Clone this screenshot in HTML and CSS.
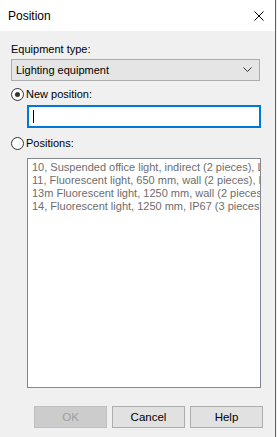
FILE: index.html
```html
<!DOCTYPE html>
<html lang="en">
<head>
    <meta charset="UTF-8">
    <title>Position</title>
    <link rel="stylesheet" href="styles.css">
</head>
<body>
    <div class="dialog">
        <div class="titlebar">
            <span class="title">Position</span>
            <svg class="close" width="10" height="10" viewBox="0 0 10 10">
                <path d="M0.5 0.5 L9.5 9.5 M9.5 0.5 L0.5 9.5" stroke="#000" stroke-width="1" fill="none"/>
            </svg>
        </div>
        <div class="content">
            <div class="label">Equipment type:</div>
            <div class="combo">
                <span>Lighting equipment</span>
                <svg width="9" height="6" viewBox="0 0 9 6">
                    <path d="M0.5 0.5 L4.5 4.5 L8.5 0.5" stroke="#333" stroke-width="1" fill="none"/>
                </svg>
            </div>
            <div class="radio-row first">
                <span class="radio checked"></span>
                <span>New position:</span>
            </div>
            <div class="textbox"><span class="caret"></span></div>
            <div class="radio-row second">
                <span class="radio"></span>
                <span>Positions:</span>
            </div>
            <div class="listbox">
                <div>10, Suspended office light, indirect (2 pieces), Li</div>
                <div>11, Fluorescent light, 650 mm, wall (2 pieces), F</div>
                <div>13m Fluorescent light, 1250 mm, wall (2 pieces),</div>
                <div>14, Fluorescent light, 1250 mm, IP67 (3 pieces),</div>
            </div>
            <div class="buttons">
                <button class="btn" disabled>OK</button>
                <button class="btn">Cancel</button>
                <button class="btn">Help</button>
            </div>
        </div>
    </div>
</body>
</html>
```

FILE: styles.css
```css
html, body {
    margin: 0;
    padding: 0;
}
body {
    font-family: "Liberation Sans", Arial, sans-serif;
    font-size: 11px;
    color: #000;
    background: #f0f0f0;
}
.dialog {
    width: 275px;
    height: 437px;
    border-right: 1px solid #5f5f5f;
    background: #f0f0f0;
    display: flex;
    flex-direction: column;
}
.titlebar {
    height: 31px;
    background: #fff;
    display: flex;
    align-items: center;
    justify-content: space-between;
    padding: 0 11px 0 8px;
    flex-shrink: 0;
}
.title {
    font-size: 12px;
    padding-top: 1px;
}
.content {
    padding: 9px 0 0 11px;
    display: flex;
    flex-direction: column;
}
.label {
    height: 18px;
    line-height: 18px;
}
.combo {
    height: 20px;
    margin-top: 1px;
    border: 1px solid #adadad;
    background: #e5e5e5;
    display: flex;
    align-items: center;
    justify-content: space-between;
    padding: 0 7px 0 4px;
    width: 236px;
}
.radio-row {
    display: flex;
    align-items: center;
    height: 16px;
}
.radio-row.first {
    margin-top: 5px;
}
.radio-row.second {
    margin-top: 7px;
}
.radio {
    width: 11px;
    height: 11px;
    border: 1px solid #333;
    border-radius: 50%;
    background: #fff;
    margin-right: 2px;
    position: relative;
}
.radio.checked::after {
    content: "";
    position: absolute;
    left: 3px;
    top: 3px;
    width: 5px;
    height: 5px;
    border-radius: 50%;
    background: #333;
}
.textbox {
    margin: 3px 0 0 16px;
    width: 230px;
    height: 19px;
    border: 2px solid #0078d7;
    background: #fff;
    display: flex;
    align-items: center;
}
.caret {
    width: 1px;
    height: 13px;
    background: #000;
    margin-left: 4px;
}
.listbox {
    margin: 7px 0 0 16px;
    height: 226px;
    width: 228px;
    border: 1px solid #828790;
    background: #fff;
    overflow: hidden;
    padding: 2px 0 0 4px;
    color: #6d6d6d;
    white-space: nowrap;
}
.listbox div {
    height: 13px;
    line-height: 13px;
}
.buttons {
    display: flex;
    gap: 5px;
    margin: 18px 0 0 23px;
}
.btn {
    width: 73px;
    height: 22px;
    font-family: inherit;
    font-size: 11.5px;
    border: 1px solid #adadad;
    background: #e1e1e1;
    color: #000;
    padding: 0;
}
.btn:disabled {
    background: #cccccc;
    border-color: #bfbfbf;
    color: #a0a0a0;
}
```
